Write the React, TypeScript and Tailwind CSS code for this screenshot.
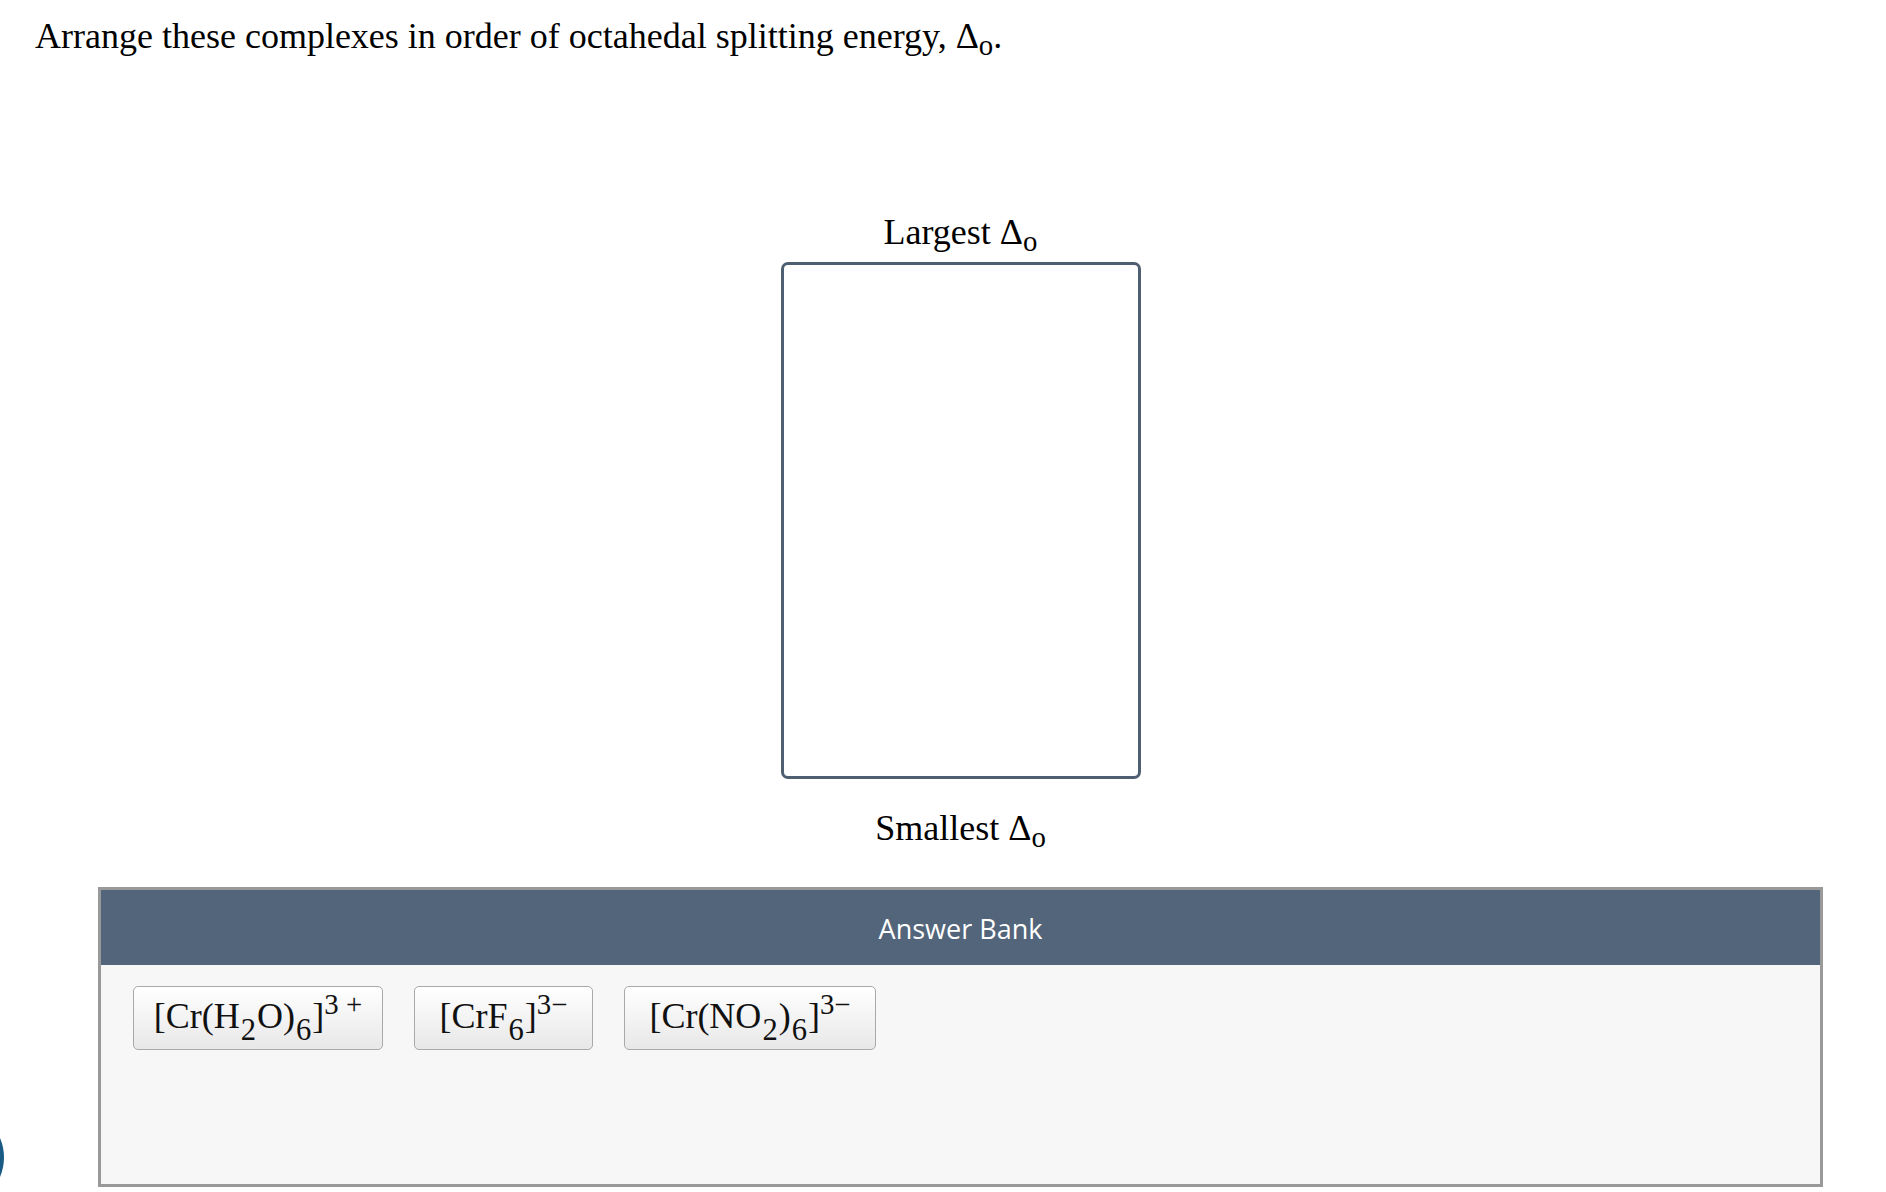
export default function App() {
  const serif = "font-['Liberation_Serif','Times_New_Roman',serif]";

  return (
    <main className="relative min-h-screen overflow-hidden bg-white text-black">
      {/* Question */}
      <p className={`${serif} pl-[35px] pt-[14px] text-[36px] leading-[44px]`}>
        Arrange these complexes in order of octahedal splitting energy, Δ<sub className="text-[80%]">o</sub>.
      </p>

      <div className="ml-[98px] w-[1725px]">
        {/* Drop zone */}
        <div className="flex flex-col items-center">
          <div className={`${serif} mt-[154px] text-[36px] leading-[40px]`}>
            Largest Δ<sub className="text-[80%]">o</sub>
          </div>
          <div className="mt-[10px] h-[517px] w-[360px] rounded-[7px] border-[3px] border-[#4f5f72] bg-white" />
          <div className={`${serif} mt-[29px] text-[36px] leading-[40px]`}>
            Smallest Δ<sub className="text-[80%]">o</sub>
          </div>
        </div>

        {/* Answer Bank */}
        <div className="mt-[39px] border-[3px] border-[#999999]">
          <div className="flex h-[75px] items-center justify-center bg-[#53657a] pt-[3px] font-['Open_Sans',sans-serif] text-[27px] text-white">
            Answer Bank
          </div>
          <div className="flex h-[219px] gap-[31px] bg-[#f7f7f7] pl-[32px] pt-[21px]">
            <Chip width="w-[250px]">
              [Cr(H<Sub>2</Sub>O)<Sub>6</Sub>]<sup className="text-[80%]">3 +</sup>
            </Chip>
            <Chip width="w-[179px]">
              [CrF<Sub>6</Sub>]<sup className="text-[80%]">3−</sup>
            </Chip>
            <Chip width="w-[252px]">
              [Cr(NO<Sub>2</Sub>)<Sub>6</Sub>]<sup className="text-[80%]">3−</sup>
            </Chip>
          </div>
        </div>
      </div>

      {/* help button peeking in from the left edge */}
      <div className="absolute left-[-95px] top-[1108px] h-[99px] w-[99px] rounded-full bg-[#1a5b85]" />
    </main>
  );
}

function Sub({ children }: { children: React.ReactNode }) {
  return <sub className="bottom-[-0.4em] px-[1px] text-[85%]">{children}</sub>;
}

function Chip({ width, children }: { width: string; children: React.ReactNode }) {
  return (
    <div
      className={`${width} flex h-[64px] items-center justify-center rounded-[5px] border border-[#a9a9a9] bg-gradient-to-b from-white to-[#e8e8e8] font-['Liberation_Serif','Times_New_Roman',serif] text-[36px] leading-none text-[#111]`}
    >
      <span className="-mt-[4px]">{children}</span>
    </div>
  );
}
